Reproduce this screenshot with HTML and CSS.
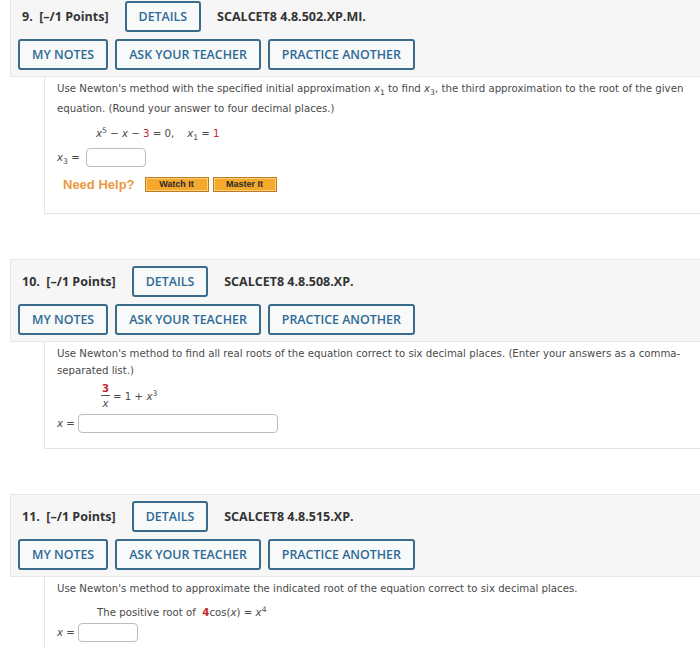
FILE: index.html
```html
<!DOCTYPE html>
<html lang="en">
<head>
<meta charset="utf-8">
<title>Questions</title>
<link rel="stylesheet" href="styles.css">
</head>
<body>
<div class="q q-first">
  <div class="qhead">
    <div class="row1">
      <span class="num">9.&nbsp; [–/1 Points]</span>
      <span class="btn">DETAILS</span>
      <span class="code">SCALCET8 4.8.502.XP.MI.</span>
    </div>
    <div class="row2">
      <span class="btn">MY NOTES</span>
      <span class="btn">ASK YOUR TEACHER</span>
      <span class="btn">PRACTICE ANOTHER</span>
    </div>
  </div>
  <div class="qbody b9">
    <p class="text t9">Use Newton's method with the specified initial approximation <i>x</i><sub>1</sub> to find <i>x</i><sub>3</sub>, the third approximation to the root of the given<br>equation. (Round your answer to four decimal places.)</p>
    <div class="eq eq9"><i>x</i><sup>5</sup> − <i>x</i> − <span class="red">3</span> = 0, &nbsp;&nbsp;&nbsp;<i>x</i><sub>1</sub> = <span class="red">1</span></div>
    <div class="answer a9"><span class="lbl"><i>x</i><sub>3</sub> =</span><span class="input w60"></span></div>
    <div class="help">
      <span class="needhelp">Need Help?</span>
      <span class="hbtn">Watch It</span>
      <span class="hbtn">Master It</span>
    </div>
  </div>
</div>

<div class="q">
  <div class="qhead">
    <div class="row1">
      <span class="num">10.&nbsp; [–/1 Points]</span>
      <span class="btn">DETAILS</span>
      <span class="code">SCALCET8 4.8.508.XP.</span>
    </div>
    <div class="row2">
      <span class="btn">MY NOTES</span>
      <span class="btn">ASK YOUR TEACHER</span>
      <span class="btn">PRACTICE ANOTHER</span>
    </div>
  </div>
  <div class="qbody b10">
    <p class="text">Use Newton's method to find all real roots of the equation correct to six decimal places. (Enter your answers as a comma-<br>separated list.)</p>
    <div class="eq eq10">
      <span class="frac"><span class="fnum red">3</span><span class="fden"><i>x</i></span></span>
      <span class="rhs">= 1 + <i>x</i><sup>3</sup></span>
    </div>
    <div class="answer a10"><span class="lbl"><i>x</i> =</span><span class="input w200"></span></div>
  </div>
</div>

<div class="q">
  <div class="qhead">
    <div class="row1">
      <span class="num">11.&nbsp; [–/1 Points]</span>
      <span class="btn">DETAILS</span>
      <span class="code">SCALCET8 4.8.515.XP.</span>
    </div>
    <div class="row2">
      <span class="btn">MY NOTES</span>
      <span class="btn">ASK YOUR TEACHER</span>
      <span class="btn">PRACTICE ANOTHER</span>
    </div>
  </div>
  <div class="qbody b11">
    <p class="text">Use Newton's method to approximate the indicated root of the equation correct to six decimal places.</p>
    <div class="eq eq11">The positive root of &nbsp;<span class="red bold">4</span>cos(<i>x</i>) = <i>x</i><sup>4</sup></div>
    <div class="answer a11"><span class="lbl"><i>x</i> =</span><span class="input w60"></span></div>
  </div>
</div>
</body>
</html>
```
FILE: styles.css
```css
html, body {
  margin: 0;
  padding: 0;
  background: #ffffff;
  overflow: hidden;
}

.q {
  margin-left: 10px;
}
.q + .q {
  margin-top: 45px;
}
.q-first {
  margin-top: -6px;
}

.qhead {
  background: #f6f6f6;
  border: 1px solid #e8e8e8;
  border-right: 0;
  padding: 6px 0 6px 7px;
  display: flex;
  flex-direction: column;
  gap: 7px;
  font-family: "Open Sans", "Liberation Sans", sans-serif;
}

.row1 {
  display: flex;
  align-items: center;
  gap: 16px;
  padding-left: 4px;
  height: 31px;
}

.num, .code {
  font-weight: 700;
  font-size: 12.5px;
  color: #333333;
  white-space: nowrap;
}

.row2 {
  display: flex;
  gap: 7px;
}

.btn {
  box-sizing: border-box;
  height: 31px;
  display: inline-flex;
  align-items: center;
  padding: 0 12px;
  border: 2px solid #3a6b8b;
  border-radius: 3px;
  color: #2d6a96;
  font-weight: 600;
  font-size: 12.4px;
  background: #f8f9f9;
  white-space: nowrap;
}

.qbody {
  margin-left: 34px;
  border-left: 1px solid #e3e3e3;
  border-bottom: 1px solid #e3e3e3;
  padding-left: 12px;
  font-family: "DejaVu Sans", Verdana, sans-serif;
  font-size: 10.2px;
  color: #4a4a4a;
}

.b9 { padding-top: 2px; padding-bottom: 21px; }
.b10 { padding-top: 3px; padding-bottom: 15px; }
.b11 { padding-top: 3px; padding-bottom: 10px; }

.text {
  margin: 0;
  line-height: 17px;
  white-space: nowrap;
}
.t9 {
  line-height: 20px;
}

sub {
  font-size: 75%;
  vertical-align: -3px;
  line-height: 0;
}
sup {
  font-size: 75%;
  vertical-align: 4px;
  line-height: 0;
}

.red { color: #c0282d; }
.bold { font-weight: 700; }

.eq {
  line-height: 18px;
  white-space: nowrap;
}
.eq9 { margin-top: 6px; padding-left: 39px; }
.eq10 {
  margin-top: 4px;
  padding-left: 44px;
  display: flex;
  align-items: center;
  gap: 3px;
}
.eq11 { margin-top: 7px; padding-left: 40px; }

.frac {
  display: inline-flex;
  flex-direction: column;
  align-items: center;
  line-height: 11px;
}
.fnum {
  font-weight: 700;
  border-bottom: 1px solid #555555;
  padding: 0 1px 1px;
}
.fden {
  padding-top: 2px;
}
.rhs {
  padding-top: 1px;
}

.answer {
  display: flex;
  align-items: center;
  gap: 4px;
}
.a9 { margin-top: 5px; gap: 6px; }
.a10 { margin-top: 5px; gap: 3px; }
.a11 { margin-top: 1px; gap: 3px; }

.lbl {
  white-space: nowrap;
}

.input {
  box-sizing: border-box;
  display: inline-block;
  height: 19px;
  border: 1px solid #bdbdbd;
  border-radius: 4px;
  background: #ffffff;
}
.w60 { width: 60px; }
.w200 { width: 200px; }

.help {
  margin-top: 9px;
  padding-left: 6px;
  display: flex;
  align-items: center;
  height: 16px;
}
.needhelp {
  font-family: "Liberation Sans", Arial, sans-serif;
  font-weight: 700;
  font-size: 13px;
  color: #e8993f;
  margin-right: 10px;
}
.hbtn {
  box-sizing: border-box;
  width: 64px;
  height: 15px;
  margin-right: 4px;
  display: inline-flex;
  align-items: center;
  justify-content: center;
  border: 1px solid #c07a1f;
  box-shadow: inset 0 0 0 1px #fdd07a;
  background: #f6a82c;
  font-family: "Liberation Sans", Arial, sans-serif;
  font-weight: 700;
  font-size: 9px;
  color: #2a2a2a;
}
```
